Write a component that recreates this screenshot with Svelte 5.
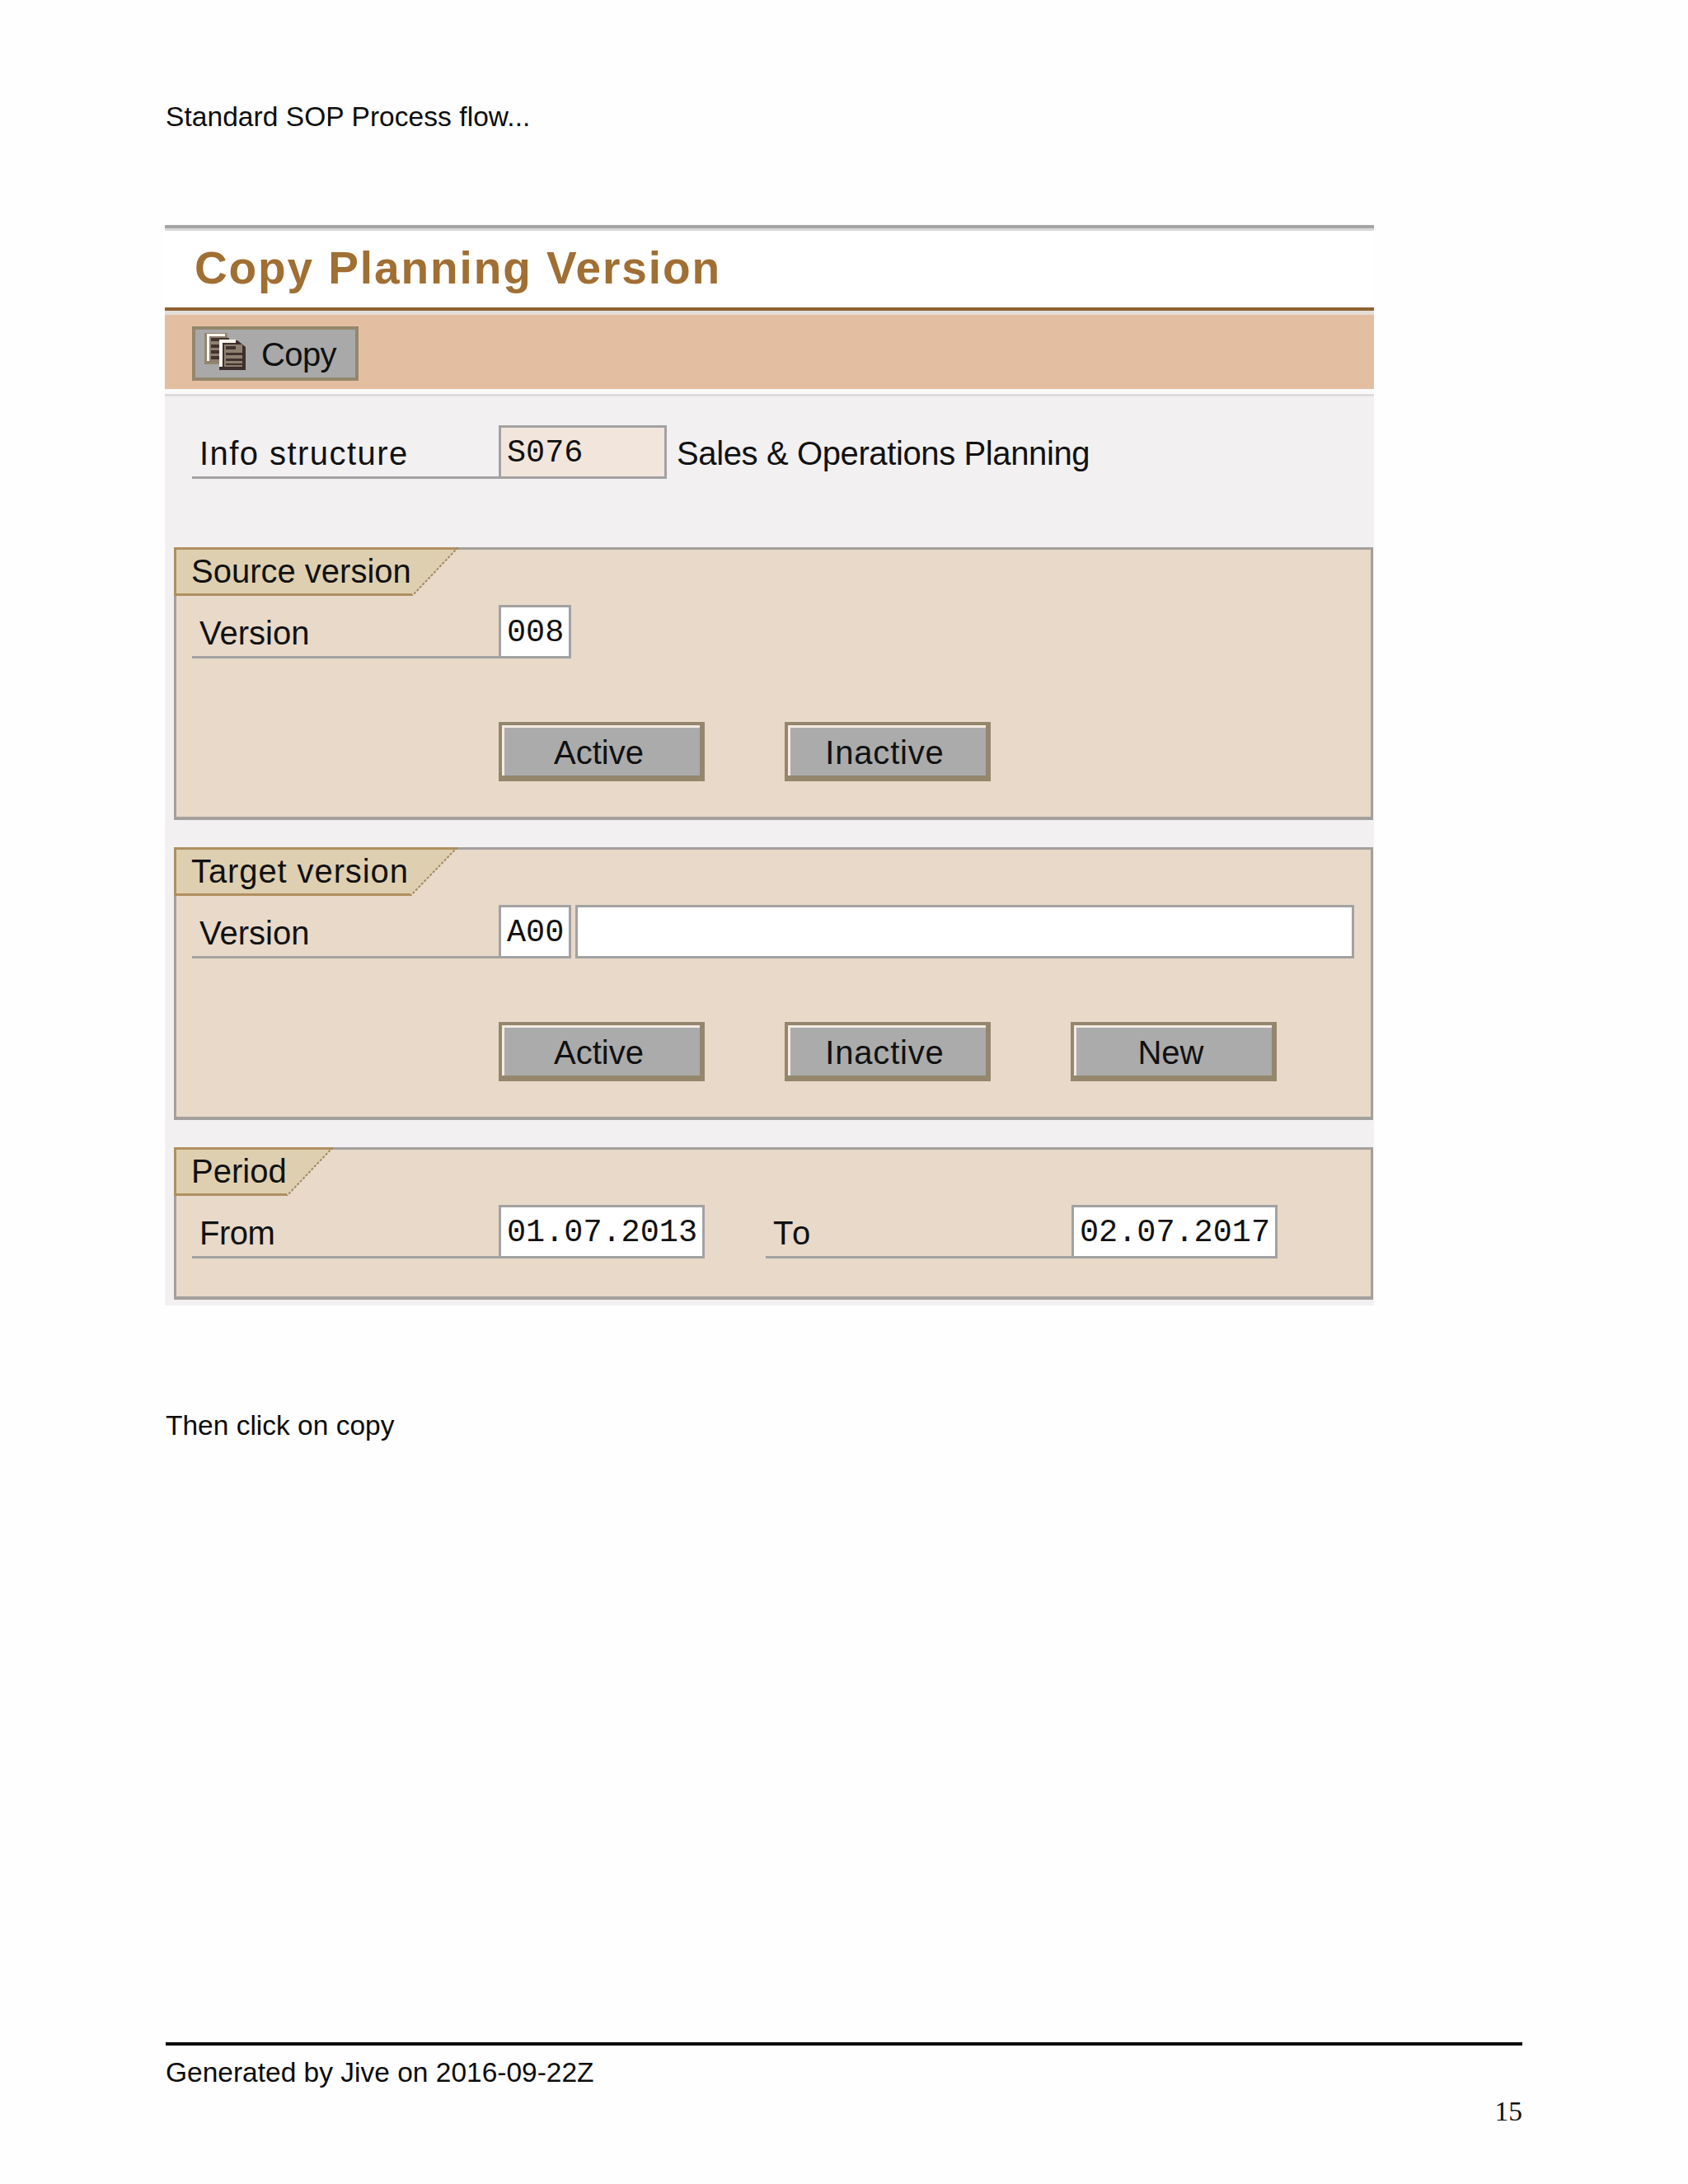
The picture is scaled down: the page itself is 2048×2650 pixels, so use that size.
<script>
    const legendHeight = 59;

    // track = letter-spacing that brings the text to the reference width
    const groups = [
        {
            title: 'Source version',
            track: 0,
            width: 345,
            slant: 56,
            fields: [{ label: 'Version', value: '008', size: 'small', track: 0 }],
            buttons: [{ text: 'Active', track: 0 }, { text: 'Inactive', track: 0.8 }]
        },
        {
            title: 'Target version',
            track: 0.9,
            width: 344,
            slant: 57,
            fields: [{ label: 'Version', value: 'A00', size: 'small', track: 0, extra: true }],
            buttons: [{ text: 'Active', track: 0 }, { text: 'Inactive', track: 0.8 }, { text: 'New', track: 0 }]
        },
        {
            title: 'Period',
            track: 0,
            width: 193,
            slant: 56,
            fields: [
                { label: 'From', value: '01.07.2013', size: 'date', track: -0.5 },
                { label: 'To', value: '02.07.2017', size: 'date', track: 3, short: true }
            ],
            buttons: []
        }
    ];
</script>

<div class="page">
    <p class="line first">Standard SOP Process flow...</p>

    <div class="shot">
        <div class="title-bar">
            <h1>Copy Planning Version</h1>
        </div>
        <div class="toolbar">
            <div class="band">
                <div class="copy-btn">
                    <svg class="copy-icon" width="50" height="45" viewBox="0 0 50 45">
                        <!-- back sheet -->
                        <rect x="0" y="0" width="28" height="38" fill="#94876d" />
                        <rect x="5" y="4" width="23" height="32" fill="#8d8070" />
                        <rect x="8" y="6" width="22" height="4" fill="#43332f" />
                        <rect x="8" y="14" width="12" height="4" fill="#43332f" />
                        <rect x="8" y="21" width="12" height="4" fill="#43332f" />
                        <rect x="8" y="28" width="12" height="4" fill="#43332f" />
                        <path d="M3 1H25V4H6V34H3z" fill="#fbf6ee" />
                        <!-- front sheet -->
                        <path d="M18 9H40L50 17V45H18z" fill="#3e2f2d" />
                        <rect x="24" y="14" width="22" height="27" fill="#8d8070" />
                        <rect x="26" y="16" width="12" height="4" fill="#43332f" />
                        <rect x="26" y="24" width="20" height="3" fill="#43332f" />
                        <rect x="26" y="31" width="20" height="3" fill="#43332f" />
                        <rect x="26" y="37" width="20" height="2" fill="#43332f" />
                        <path d="M18 8H38V12H22V41H18z" fill="#fbf6ee" />
                    </svg>
                    <span>Copy</span>
                </div>
            </div>
        </div>

        <div class="panel">
            <div class="row info-row">
                <span class="label info-label">Info structure</span>
                <span class="field readonly">S076</span>
                <span class="desc">Sales &amp; Operations Planning</span>
            </div>

            {#each groups as group}
                <section class="group">
                    <div class="legend" style="width: {group.width}px">
                        <svg class="legend-bg" width={group.width} height={legendHeight}>
                            <polygon
                                points="0,0 {group.width},0 {group.width - group.slant},{legendHeight} 0,{legendHeight}"
                                fill="#decfb0"
                            />
                            <path
                                d="M{group.width},1.5H1.5V{legendHeight - 1.5}H{group.width - group.slant}"
                                fill="none"
                                stroke="#b08f60"
                                stroke-width="3"
                            />
                            <line
                                x1={group.width}
                                y1="0"
                                x2={group.width - group.slant}
                                y2={legendHeight}
                                stroke="#a08a60"
                                stroke-width="2"
                                stroke-dasharray="3 2"
                            />
                        </svg>
                        <span class="legend-text" style="letter-spacing: {group.track}px">{group.title}</span>
                    </div>

                    <div class="row">
                        {#each group.fields as f}
                            <span class="label" class:short={f.short} style="letter-spacing: {f.track}px">{f.label}</span>
                            <span class="field {f.size}">{f.value}</span>
                            {#if f.extra}
                                <span class="field long"></span>
                            {/if}
                        {/each}
                    </div>

                    {#if group.buttons.length}
                        <div class="actions">
                            {#each group.buttons as b}
                                <div class="btn" style="letter-spacing: {b.track}px">{b.text}</div>
                            {/each}
                        </div>
                    {/if}
                </section>
            {/each}
        </div>
    </div>

    <p class="line then">Then click on copy</p>

    <footer>
        <p class="line">Generated by Jive on 2016-09-22Z</p>
        <p class="page-no">15</p>
    </footer>
</div>

<style>
    :global(body) {
        margin: 0;
        background: #fefefe;
    }
    .page {
        box-sizing: border-box;
        width: 2048px;
        height: 2650px;
        padding: 122px 201px 68px 201px;
        display: flex;
        flex-direction: column;
        font-family: "Liberation Sans", Arial, sans-serif;
        color: #111;
    }
    p {
        margin: 0;
    }
    .line {
        font-size: 33.5px;
        line-height: 40px;
        color: #0c0c0c;
    }
    .first {
        letter-spacing: 0.06px;
    }
    .then {
        margin-top: 126px;
    }

    .shot {
        width: 1467px;
        margin: 111px 0 0 -1px;
        background: #fff;
    }
    .title-bar {
        box-sizing: border-box;
        height: 104px;
        border-top: 4px solid #a5a5a5;
        border-bottom: 4px solid #8f6232;
        box-shadow: inset 0 3px 0 #d8d8d8;
        padding: 16px 0 0 36px;
    }
    h1 {
        margin: 0;
        font-size: 55px;
        line-height: 64px;
        letter-spacing: 1.9px;
        font-weight: 700;
        color: #a06f33;
    }
    .toolbar {
        border-top: 5px solid #e3ded8;
        border-bottom: 3px solid #dedcdb;
        padding-bottom: 6px;
        background: #fafafa;
    }
    .band {
        box-sizing: border-box;
        height: 90px;
        padding: 14px 0 0 33px;
        background: #e4bea0;
    }
    .copy-btn {
        box-sizing: border-box;
        width: 202px;
        height: 66px;
        display: flex;
        align-items: center;
        gap: 19px;
        padding-left: 11px;
        background: #a9a9a9;
        border: 4px solid #94876d;
        font-size: 40px;
    }
    .copy-btn span {
        letter-spacing: -0.6px;
        padding-top: 2px;
    }
    .copy-icon {
        flex: none;
        margin-top: -6px;
    }

    .panel {
        background: #f2f0f0;
        padding: 35px 1px 7px 11px;
    }
    .info-row {
        padding-left: 22px;
        margin-bottom: 83px;
    }
    .row {
        display: flex;
        align-items: flex-start;
        font-size: 40px;
    }
    .group .row {
        padding-left: 19px;
        margin-top: 11px;
    }
    .label {
        box-sizing: border-box;
        width: 372px;
        height: 65px;
        padding: 10px 0 0 9px;
        line-height: 48px;
        border-bottom: 3px solid #a3a2a2;
    }
    .info-label {
        letter-spacing: 1.45px;
    }
    .label.short {
        width: 371px;
        margin-left: 74px;
    }
    .field {
        box-sizing: border-box;
        height: 65px;
        padding: 2px 0 0 7px;
        display: flex;
        align-items: center;
        border: 3px solid #a3a2a2;
        background: #fff;
        font-family: "Liberation Mono", "Courier New", monospace;
        font-size: 38.5px;
    }
    .readonly {
        width: 204px;
        background: #f2e6dc;
    }
    .small {
        width: 88px;
    }
    .date {
        width: 250px;
    }
    .long {
        width: 945px;
        margin-left: 5px;
    }
    .desc {
        margin-left: 12px;
        padding-top: 10px;
        line-height: 48px;
        letter-spacing: -0.38px;
    }

    .group {
        border: 3px solid #a3a09c;
        border-bottom-width: 4px;
        background: #e9d9c9;
        padding-bottom: 43px;
    }
    .group + .group {
        margin-top: 33px;
    }
    .group:last-child {
        padding-bottom: 46px;
    }
    .legend {
        position: relative;
        height: 59px;
        margin: -3px 0 0 -3px;
    }
    .legend-bg {
        position: absolute;
        top: 0;
        left: 0;
    }
    .legend-text {
        position: relative;
        display: block;
        padding: 5px 0 0 21px;
        font-size: 40px;
        line-height: 48px;
    }
    .actions {
        display: flex;
        gap: 97px;
        padding-left: 391px;
        margin-top: 77px;
    }
    .btn {
        box-sizing: border-box;
        width: 250px;
        height: 72px;
        padding: 5px 5px 0 0;
        display: flex;
        align-items: center;
        justify-content: center;
        background: #ababab;
        border: 4px solid #94876d;
        border-right-width: 6px;
        border-bottom-width: 7px;
        box-shadow: inset 3px 3px 0 #f3ebe2;
        font-size: 40px;
    }

    footer {
        margin-top: auto;
        border-top: 4px solid #0a0a0a;
        padding-top: 13px;
    }
    .page-no {
        margin-top: 7px;
        text-align: right;
        font-family: "Liberation Serif", "Times New Roman", serif;
        font-size: 33.5px;
        line-height: 40px;
    }
</style>
